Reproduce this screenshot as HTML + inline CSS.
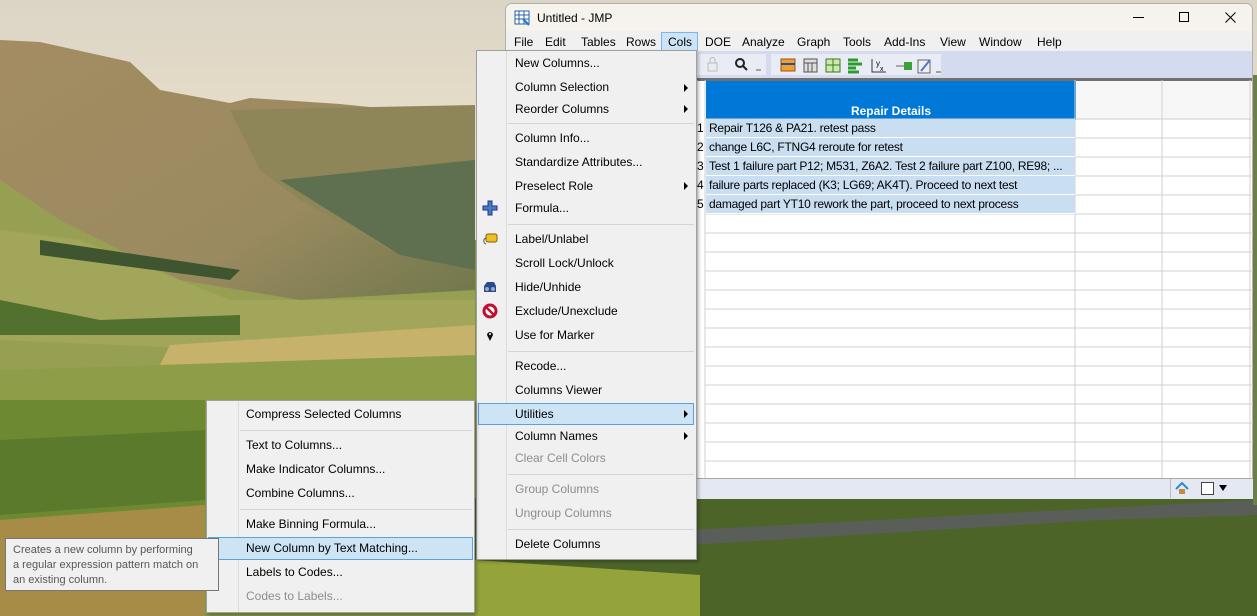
<!DOCTYPE html>
<html><head><meta charset="utf-8"><style>
*{margin:0;padding:0;box-sizing:border-box}
body{width:1257px;height:616px;overflow:hidden;position:relative;font-family:"Liberation Sans",sans-serif;font-size:12px;color:#000;background:#7a8a50}
.a{position:absolute}
.mi{position:absolute;white-space:nowrap;font-size:12px;line-height:14px}
.g{color:#8d8d8d}
.sep{position:absolute;height:1px;background:#d5d5d5}
.arr{position:absolute;width:0;height:0;border-top:4px solid transparent;border-bottom:4px solid transparent;border-left:4px solid #000}
.row{position:absolute;left:706px;width:369px;height:19px;background:#c9def0;border-bottom:1px solid #fff;padding-left:3px;line-height:18px;font-size:12px;white-space:nowrap;overflow:hidden;letter-spacing:-0.25px}
</style></head><body>
<svg class="a" style="left:0;top:0" width="1257" height="616">
<defs>
<linearGradient id="sky" x1="0" y1="0" x2="0" y2="1"><stop offset="0" stop-color="#dcd5c6"/><stop offset="1" stop-color="#efe3ca"/></linearGradient>
<linearGradient id="mt" x1="0" y1="0" x2="1" y2="1"><stop offset="0" stop-color="#a48c62"/><stop offset="0.6" stop-color="#9a8a60"/><stop offset="1" stop-color="#6a7448"/></linearGradient>
</defs>
<rect width="1257" height="616" fill="#7f9640"/>
<rect width="1257" height="240" fill="url(#sky)"/>
<polygon points="0,40 40,42 130,62 160,90 230,103 250,98 340,104 400,110 475,106 475,330 0,330" fill="url(#mt)"/>
<polygon points="230,110 475,105 475,270 390,250 300,200 260,170" fill="#8e8658"/>
<polygon points="280,180 475,160 475,270 400,255" fill="#5e7050"/>
<polygon points="0,180 60,220 180,280 300,300 475,290 475,400 0,400" fill="#97a052"/>
<polygon points="0,230 80,240 230,300 475,300 475,360 0,340" fill="#a2a65a"/>
<polygon points="170,345 475,325 475,365 160,365" fill="#c6b26a"/>
<polygon points="0,370 475,355 475,400 0,400" fill="#8e9e48"/>
<polygon points="40,240 240,270 230,280 40,255" fill="#3e5530"/>
<polygon points="0,300 100,320 240,315 240,335 0,335" fill="#52702e"/>
<polygon points="0,400 205,400 205,616 0,616" fill="#6d8a32"/>
<polygon points="0,440 205,430 205,500 0,515" fill="#5c7a2c"/>
<polygon points="0,520 205,505 205,616 0,616" fill="#a78c48"/>
<polygon points="475,498 1257,498 1257,616 475,616" fill="#4c6428"/>
<polygon points="690,530 1160,505 1257,500 1257,515 1100,520 690,545" fill="#5a5e58"/>
<polygon points="475,560 700,575 700,616 475,616" fill="#95a43a"/>
<rect x="1253" y="75" width="4" height="430" fill="#6c7f44"/>
</svg>

<!-- JMP window -->
<div class="a" style="left:505px;top:3px;width:748px;height:496px;background:#fff;border:1px solid #b0b0b0;border-radius:7px 7px 0 0;overflow:hidden">
 <div class="a" style="left:0;top:0;width:748px;height:27px;background:#f6f2ec"></div>
 <svg class="a" style="left:8px;top:6px" width="16" height="16"><rect x="1" y="1" width="14" height="13" fill="#fff" stroke="#2b5fb0"/><path d="M1 5h14M1 9h14M5 1v13M10 1v13" stroke="#2b5fb0"/><path d="M9 9l6 6" stroke="#1a7ad0" stroke-width="2"/></svg>
 <div class="mi" style="left:31px;top:7px;font-size:12px">Untitled - JMP</div>
 <div class="a" style="left:627px;top:13px;width:11px;height:1px;background:#000"></div>
 <div class="a" style="left:673px;top:8px;width:10px;height:10px;border:1px solid #000"></div>
 <svg class="a" style="left:719px;top:8px" width="11" height="11"><path d="M0.5 0.5l10 10M10.5 0.5l-10 10" stroke="#000"/></svg>
 <div class="a" style="left:0;top:27px;width:748px;height:20px;background:#f0f0f0"></div>
 <div class="a" style="left:155px;top:28px;width:37px;height:19px;background:#cde4f7;border:1px solid #7eb4ea"></div>
 <div class="mi" style="left:8px;top:31px">File</div>
 <div class="mi" style="left:39px;top:31px">Edit</div>
 <div class="mi" style="left:75px;top:31px">Tables</div>
 <div class="mi" style="left:120px;top:31px">Rows</div>
 <div class="mi" style="left:162px;top:31px">Cols</div>
 <div class="mi" style="left:199px;top:31px">DOE</div>
 <div class="mi" style="left:236px;top:31px">Analyze</div>
 <div class="mi" style="left:291px;top:31px">Graph</div>
 <div class="mi" style="left:337px;top:31px">Tools</div>
 <div class="mi" style="left:378px;top:31px">Add-Ins</div>
 <div class="mi" style="left:434px;top:31px">View</div>
 <div class="mi" style="left:473px;top:31px">Window</div>
 <div class="mi" style="left:531px;top:31px">Help</div>
 <div class="a" style="left:0;top:47px;width:748px;height:27px;background:#d5dbee"></div>
 <div class="a" style="left:190px;top:50px;width:70px;height:21px;background:#e9ecf5"></div>
 <div class="a" style="left:265px;top:50px;width:170px;height:21px;background:#e9ecf5"></div>
 <svg class="a" style="left:200px;top:52px" width="240" height="20">
  <rect x="2" y="7" width="9" height="8" fill="none" stroke="#bbb"/><path d="M4 7V4a2.5 2.5 0 0 1 5 0v3" fill="none" stroke="#bbb"/>
  <circle cx="34" cy="7" r="4" fill="none" stroke="#222" stroke-width="2"/><path d="M37 10l4 4" stroke="#222" stroke-width="2"/>
  <path d="M50 14h5" stroke="#555"/>
  <rect x="75" y="3" width="14" height="12" fill="#f0a030" stroke="#a05010"/><path d="M75 8h14" stroke="#2050a0" stroke-width="2"/>
  <rect x="98" y="3" width="13" height="13" fill="#ddd" stroke="#555"/><path d="M98 7h13M102 7v9M106 7v9" stroke="#555"/>
  <rect x="120" y="3" width="14" height="13" fill="#cde8b0" stroke="#3a7a20"/><path d="M127 3v13M120 9h14" stroke="#3a7a20"/>
  <path d="M142 4h10M142 8h14M142 12h8M142 16h11" stroke="#2e9a2e" stroke-width="3"/>
  <path d="M166 3v13h14" stroke="#333" fill="none"/><text x="170" y="10" font-size="8" font-family="Liberation Sans">y</text><text x="174" y="15" font-size="7" font-family="Liberation Sans">x</text>
  <path d="M190 10h10" stroke="#666"/><rect x="198" y="6" width="8" height="8" fill="#3aa03a"/>
  <rect x="212" y="4" width="12" height="13" fill="#eee" stroke="#666"/><path d="M215 15l9-11" stroke="#4a7ad0" stroke-width="2"/>
  <path d="M230 16h5" stroke="#555"/>
 </svg>
 <div class="a" style="left:0;top:74px;width:748px;height:3px;background:#707070"></div>
 <div class="a" style="left:0;top:77px;width:748px;height:398px;background:#fff"></div>
 <div class="a" style="left:200px;top:77px;width:548px;height:39px;background:#f7f7f7"></div>
 <div class="a" style="left:200px;top:77px;width:370px;height:39px;background:#0078d7;color:#fff;font-weight:bold;text-align:center;padding-top:23px">Repair Details</div>
</div>
<svg class="a" style="left:505px;top:80px" width="748" height="398">
 <g stroke="#d0d0d0">
 <path d="M192 0v398M200 0v398M570 0v398M657 0v398M745 0v398"/>
 <path d="M200 39h548M200 58h548M200 77h548M200 96h548M200 115h548M200 134h548M200 153h548M200 172h548M200 191h548M200 210h548M200 229h548M200 248h548M200 267h548M200 286h548M200 305h548M200 324h548M200 343h548M200 362h548M200 381h548"/>
 </g>
</svg>
<div class="row" style="top:119px">Repair T126 &amp; PA21. retest pass</div>
<div class="row" style="top:138px">change L6C, FTNG4 reroute for retest</div>
<div class="row" style="top:157px">Test 1 failure part P12; M531, Z6A2. Test 2 failure part Z100, RE98; ...</div>
<div class="row" style="top:176px">failure parts replaced (K3; LG69; AK4T). Proceed to next test</div>
<div class="row" style="top:195px">damaged part YT10 rework the part, proceed to next process</div>
<div class="mi" style="left:697px;top:121px">1</div>
<div class="mi" style="left:697px;top:140px">2</div>
<div class="mi" style="left:697px;top:159px">3</div>
<div class="mi" style="left:697px;top:178px">4</div>
<div class="mi" style="left:697px;top:197px">5</div>
<div class="a" style="left:505px;top:478px;width:748px;height:21px;background:#e3e8f2;border-top:1px solid #a8a8a8"></div>
<div class="a" style="left:1170px;top:479px;width:1px;height:19px;background:#bbb"></div>
<svg class="a" style="left:1175px;top:482px" width="14" height="13"><path d="M1 7L7 1l6 6" fill="none" stroke="#2a8ad8" stroke-width="2"/><rect x="4" y="7" width="6" height="5" fill="#c08a40"/></svg>
<div class="a" style="left:1201px;top:482px;width:13px;height:13px;background:#fff;border:1px solid #444"></div>
<div class="a" style="left:1219px;top:485px;border-left:4px solid transparent;border-right:4px solid transparent;border-top:6px solid #000"></div>

<!-- Cols menu -->
<div class="a" style="left:476px;top:50px;width:221px;height:510px;background:#f0f0f0;border:1px solid #a0a0a0;box-shadow:2px 2px 3px rgba(0,0,0,.25)"></div>
<div class="a" style="left:506px;top:51px;width:1px;height:508px;background:#dcdcdc"></div>
<div class="a" style="left:478px;top:403px;width:216px;height:22px;background:#cce4f4;border:1px solid #5aa2d8"></div>
<div class="mi" style="left:515px;top:56px">New Columns...</div>
<div class="mi" style="left:515px;top:80px">Column Selection</div><div class="arr" style="left:684px;top:84px"></div>
<div class="mi" style="left:515px;top:102px">Reorder Columns</div><div class="arr" style="left:684px;top:105px"></div>
<div class="sep" style="left:508px;top:123px;width:186px"></div>
<div class="mi" style="left:515px;top:131px">Column Info...</div>
<div class="mi" style="left:515px;top:155px">Standardize Attributes...</div>
<div class="mi" style="left:515px;top:179px">Preselect Role</div><div class="arr" style="left:684px;top:182px"></div>
<div class="mi" style="left:515px;top:201px">Formula...</div>
<div class="sep" style="left:508px;top:224px;width:186px"></div>
<div class="mi" style="left:515px;top:232px">Label/Unlabel</div>
<div class="mi" style="left:515px;top:256px">Scroll Lock/Unlock</div>
<div class="mi" style="left:515px;top:280px">Hide/Unhide</div>
<div class="mi" style="left:515px;top:304px">Exclude/Unexclude</div>
<div class="mi" style="left:515px;top:328px">Use for Marker</div>
<div class="sep" style="left:508px;top:351px;width:186px"></div>
<div class="mi" style="left:515px;top:359px">Recode...</div>
<div class="mi" style="left:515px;top:383px">Columns Viewer</div>
<div class="mi" style="left:515px;top:407px">Utilities</div><div class="arr" style="left:684px;top:410px"></div>
<div class="mi" style="left:515px;top:429px">Column Names</div><div class="arr" style="left:684px;top:432px"></div>
<div class="mi g" style="left:515px;top:451px">Clear Cell Colors</div>
<div class="sep" style="left:508px;top:474px;width:186px"></div>
<div class="mi g" style="left:515px;top:482px">Group Columns</div>
<div class="mi g" style="left:515px;top:506px">Ungroup Columns</div>
<div class="sep" style="left:508px;top:529px;width:186px"></div>
<div class="mi" style="left:515px;top:537px">Delete Columns</div>
<svg class="a" style="left:482px;top:200px" width="16" height="16"><path d="M6 1h4v5h5v4h-5v5H6v-5H1V6h5z" fill="#4a78c8" stroke="#1a3a80"/></svg>
<svg class="a" style="left:482px;top:232px" width="16" height="14"><rect x="4" y="2" width="11" height="8" rx="2" fill="#f0c020" stroke="#806010"/><path d="M4 6c-3 1-3 5 0 6" fill="none" stroke="#557"/></svg>
<svg class="a" style="left:482px;top:280px" width="16" height="14"><path d="M2 12V6l3-4h7l2 4v6z" fill="#2a4a90"/><circle cx="5" cy="9" r="2" fill="#9ab"/><circle cx="11" cy="9" r="2" fill="#9ab"/></svg>
<svg class="a" style="left:482px;top:303px" width="16" height="16"><circle cx="8" cy="8" r="6" fill="#fff" stroke="#c01030" stroke-width="3"/><path d="M4 4l8 8" stroke="#c01030" stroke-width="2.5"/></svg>
<svg class="a" style="left:486px;top:330px" width="8" height="12"><path d="M4 11L1 5a3 3 0 1 1 6 0z" fill="#111"/><circle cx="4" cy="4" r="1" fill="#fff"/></svg>

<!-- Utilities submenu -->
<div class="a" style="left:206px;top:400px;width:269px;height:213px;background:#f0f0f0;border:1px solid #a0a0a0;box-shadow:2px 2px 3px rgba(0,0,0,.25)"></div>
<div class="a" style="left:238px;top:401px;width:1px;height:211px;background:#dcdcdc"></div>
<div class="a" style="left:208px;top:537px;width:265px;height:23px;background:#cce4f4;border:1px solid #5aa2d8"></div>
<div class="mi" style="left:246px;top:407px">Compress Selected Columns</div>
<div class="sep" style="left:240px;top:430px;width:232px"></div>
<div class="mi" style="left:246px;top:438px">Text to Columns...</div>
<div class="mi" style="left:246px;top:462px">Make Indicator Columns...</div>
<div class="mi" style="left:246px;top:486px">Combine Columns...</div>
<div class="sep" style="left:240px;top:509px;width:232px"></div>
<div class="mi" style="left:246px;top:517px">Make Binning Formula...</div>
<div class="mi" style="left:246px;top:541px">New Column by Text Matching...</div>
<div class="mi" style="left:246px;top:565px">Labels to Codes...</div>
<div class="mi g" style="left:246px;top:589px">Codes to Labels...</div>

<div class="a" style="left:5px;top:538px;width:214px;height:53px;background:#f0f0f0;border:1px solid #767676;padding:4px 0 0 7px;font-size:11px;line-height:15px;color:#575757">Creates a new column by performing<br>a regular expression pattern match on<br>an existing column.</div>
</body></html>
